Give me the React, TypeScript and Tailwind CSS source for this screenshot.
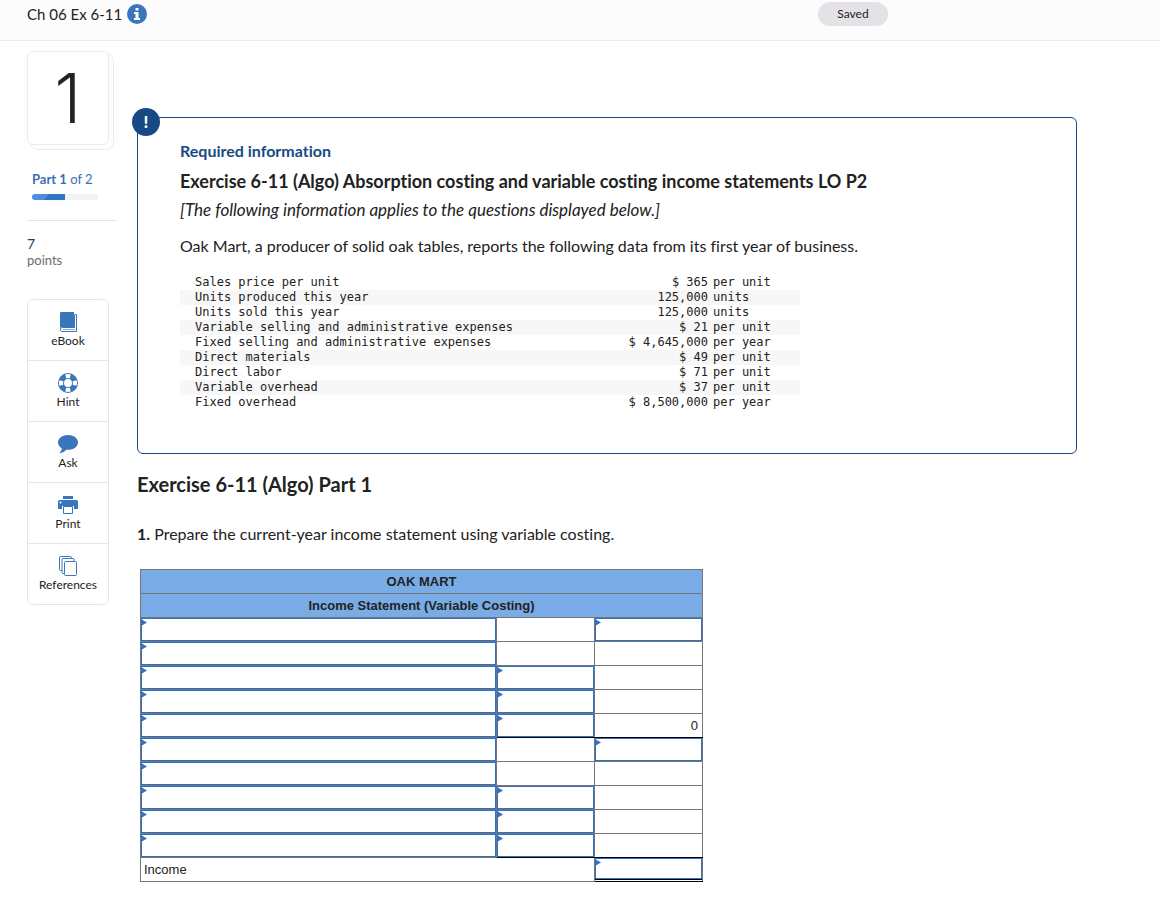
import type { ReactNode } from 'react';

const dataRows = [
  ['Sales price per unit', '$ 365', 'per unit'],
  ['Units produced this year', '125,000', 'units'],
  ['Units sold this year', '125,000', 'units'],
  ['Variable selling and administrative expenses', '$ 21', 'per unit'],
  ['Fixed selling and administrative expenses', '$ 4,645,000', 'per year'],
  ['Direct materials', '$ 49', 'per unit'],
  ['Direct labor', '$ 71', 'per unit'],
  ['Variable overhead', '$ 37', 'per unit'],
  ['Fixed overhead', '$ 8,500,000', 'per year'],
];

type Row = { mid?: boolean; end?: boolean; total?: boolean; value?: string };

const statementRows: Row[] = [
  { end: true },
  {},
  { mid: true },
  { mid: true },
  { mid: true, total: true, value: '0' },
  { end: true },
  {},
  { mid: true },
  { mid: true },
  { mid: true, total: true },
];

function BookIcon() {
  return (
    <svg width="20" height="20" viewBox="0 0 20 20" fill="none" stroke="#3a76bc" aria-hidden="true">
      <path d="M3 0h13v15H4.500c-1 0-1.700.4-2.500 1.200V1.500C2 .6 2.300 0 3 0z" fill="#3a76bc" stroke="none" />
      <path d="M17 2.500h1.500v17H4a2 2 0 0 1-1.500-2.500C2.800 16 3.500 15.500 4.500 15.500H16.500V2.500" />
      <path d="M5 17.500h12" strokeWidth=".6" />
    </svg>
  );
}

function HintIcon() {
  return (
    <svg width="20" height="20" viewBox="0 0 20 20" fill="none" aria-hidden="true">
      <circle cx="10" cy="10" r="7" stroke="#3a76bc" strokeWidth="6" />
      <g fill="#fff">
        <path d="M7.200 1.400a9 9 0 0 1 5.600 0l-1.100 4a5 5 0 0 0-3.400 0z" />
        <path d="M7.200 18.600a9 9 0 0 0 5.600 0l-1.100-4a5 5 0 0 1-3.400 0z" />
        <path d="M1.400 7.200a9 9 0 0 0 0 5.600l4-1.100a5 5 0 0 1 0-3.400z" />
        <path d="M18.600 7.200a9 9 0 0 1 0 5.600l-4-1.100a5 5 0 0 0 0-3.400z" />
      </g>
    </svg>
  );
}

function AskIcon() {
  return (
    <svg width="20" height="20" viewBox="0 0 20 20" fill="#3a76bc" aria-hidden="true">
      <path d="M10 1C4.500 1 0 4.200 0 8.400c0 2.500 1.500 4.500 3.900 5.900-.3 1.900-1.200 3.400-2.600 4.900 2.700-.3 5.100-1.400 6.900-3.500.6.100 1.200.1 1.800.1 5.500 0 10-3.200 10-7.400S15.500 1 10 1z" />
    </svg>
  );
}

function PrintIcon() {
  return (
    <svg width="20" height="20" viewBox="0 0 20 20" fill="#3a76bc" aria-hidden="true">
      <path d="M5 1h10v3H5z" />
      <path d="M1.500 5h17A1.500 1.500 0 0 1 20 6.500V14h-4v-3H4v3H0V6.500A1.500 1.500 0 0 1 1.500 5z" />
      <path d="M5.500 11.500h9v7h-9z" fill="#fff" stroke="#3a76bc" />
      <circle cx="2.500" cy="7.500" r="1" fill="#fff" />
    </svg>
  );
}

function ReferencesIcon() {
  return (
    <svg width="20" height="20" viewBox="0 0 20 20" fill="#fff" stroke="#3a76bc" aria-hidden="true">
      <rect x="1.500" y=".5" width="12" height="14" rx="1" />
      <rect x="4" y="2.500" width="12" height="15" rx="1" />
      <rect x="6.500" y="5.500" width="12" height="14" rx="1" />
    </svg>
  );
}

const tools: [string, ReactNode][] = [
  ['eBook', <BookIcon />],
  ['Hint', <HintIcon />],
  ['Ask', <AskIcon />],
  ['Print', <PrintIcon />],
  ['References', <ReferencesIcon />],
];

function Marker() {
  return (
    <svg className="absolute top-px left-0" width="6" height="7" viewBox="0 0 6 7" fill="#2f72c4" aria-hidden="true">
      <path d="M0 0l6 3.500L0 7z" />
    </svg>
  );
}

function Entry({ label }: { label: string }) {
  return (
    <div className="relative">
      <input
        type="text"
        aria-label={label}
        className="block h-[23px] w-full border-0 bg-white px-1 shadow-[inset_0_0_0_1px_#2f72c4] outline-none"
      />
      <Marker />
    </div>
  );
}

function Sidebar() {
  return (
    <aside className="w-[90px] shrink-0 pt-[10px]">
      <div className="relative h-[99px] w-[87px]">
        <div className="absolute right-0 bottom-0 h-[97px] w-[84px] rounded-lg border border-[#ececec] bg-white" />
        <div className="absolute top-0 left-0 flex h-[94px] w-[82px] items-center justify-center rounded-md border border-[#ececec] bg-white font-['Inter',sans-serif] text-[68px] font-[350] text-[#222]">
          1
        </div>
      </div>
      <div className="mt-[19px] px-[5px]">
        <p className="text-[13px] leading-5 text-[#3a6fb5]">
          <strong>Part 1</strong> of 2
        </p>
        <div className="mt-[5px] h-[6px] w-[66px] overflow-hidden rounded-full bg-[#f2f2f2]">
          <div className="h-full w-1/2 bg-linear-[135deg,#4a90d9_45%,#2b77c0_45%]" />
        </div>
      </div>
      <hr className="mt-5 border-[#e6e6e6]" />
      <p className="mt-[15px] text-[14px] leading-4 text-[#1a3f73]">7</p>
      <p className="text-[13px] leading-4 text-[#6d6d6d]">points</p>
      <nav className="mt-[31px] w-[82px] divide-y divide-[#e6e6e6] rounded-md border border-[#e6e6e6]">
        {tools.map(([label, icon]) => (
          <button
            key={label}
            type="button"
            className="flex h-[61px] w-full flex-col items-center pt-3 text-[12px] leading-[18px] last:h-[60px]"
          >
            {icon}
            {label}
          </button>
        ))}
      </nav>
    </aside>
  );
}

function RequiredInformation() {
  return (
    <section className="relative rounded-md border border-[#174a84] px-[42px] pt-[21px] pb-[43px]">
      <span className="absolute -top-[10px] -left-[6px] flex size-7 items-center justify-center rounded-full bg-[#174a84] text-[17px] font-black text-white">
        !
      </span>
      <h2 className="text-[16px] leading-6 font-bold text-[#174a84]">Required information</h2>
      <h3 className="mt-1 text-[18px] leading-7 font-bold">
        Exercise 6-11 (Algo) Absorption costing and variable costing income statements LO P2
      </h3>
      <p className="mt-[3px] text-[17px] leading-6 italic">
        [The following information applies to the questions displayed below.]
      </p>
      <p className="mt-3 text-[16px] leading-6">
        Oak Mart, a producer of solid oak tables, reports the following data from its first year of business.
      </p>
      <table className="mt-[17px] w-full max-w-[620px] table-fixed font-['DejaVu_Sans_Mono',monospace] text-[12px] leading-[15px]">
        <colgroup>
          <col />
          <col className="w-[100px]" />
          <col className="w-[92px]" />
        </colgroup>
        <tbody>
          {dataRows.map(([name, amount, unit]) => (
            <tr key={name} className="even:bg-[#f7f7f7]">
              <td className="p-0 pl-[15px]">{name}</td>
              <td className="p-0 text-right">{amount}</td>
              <td className="p-0 pl-[5px]">{unit}</td>
            </tr>
          ))}
        </tbody>
      </table>
    </section>
  );
}

function IncomeStatement() {
  return (
    <table className="mt-[23px] ml-[3px] w-full max-w-[563px] table-fixed border-collapse font-['Liberation_Sans',Arial,sans-serif] text-[13px] leading-[23px] [&_td]:h-6 [&_td]:border [&_td]:border-[#767676] [&_td]:p-0 [&_th]:h-6 [&_th]:border [&_th]:border-[#767676] [&_th]:bg-[#79ace6] [&_th]:p-0">
      <colgroup>
        <col />
        <col className="w-[98px]" />
        <col className="w-[108px]" />
      </colgroup>
      <thead>
        <tr>
          <th colSpan={3}>OAK MART</th>
        </tr>
        <tr>
          <th colSpan={3}>Income Statement (Variable Costing)</th>
        </tr>
      </thead>
      <tbody>
        {statementRows.map((row, i) => (
          <tr key={i} className={row.total ? '[&>td:not(:first-child)]:border-b-black' : ''}>
            <td>
              <Entry label={`Line ${i + 1} description`} />
            </td>
            <td>{row.mid && <Entry label={`Line ${i + 1} amount`} />}</td>
            <td className="text-right">
              {row.end && <Entry label={`Line ${i + 1} total`} />}
              {row.value && <span className="pr-1">{row.value}</span>}
            </td>
          </tr>
        ))}
        <tr className="[&>td:last-child]:border-b-black">
          <td colSpan={2}>
            <label htmlFor="income" className="pl-[3px]">
              Income
            </label>
          </td>
          <td>
            <div className="relative border-b border-black">
              <input
                id="income"
                type="text"
                className="block h-[21px] w-full border-0 bg-white px-1 shadow-[inset_0_0_0_1px_#2f72c4] outline-none"
              />
              <Marker />
            </div>
            <div className="h-px" />
          </td>
        </tr>
      </tbody>
    </table>
  );
}

export default function App() {
  return (
    <div className="bg-white font-['Lato','Open_Sans',sans-serif] text-[#222] [font-variant-ligatures:none]">
      <header className="flex h-[41px] items-start border-b border-[#ececec] bg-[#fcfcfc] pl-[27px]">
        <h1 className="pt-0.5 text-[15px] leading-6">Ch 06 Ex 6-11</h1>
        <button type="button" aria-label="Assignment details" className="mt-1 ml-[5px]">
          <svg width="20" height="20" viewBox="0 0 20 20" aria-hidden="true">
            <circle cx="10" cy="10" r="10" fill="#3a76bc" />
            <path d="M8.500 4h3v2.500h-3zM7 8h4.500v6H13v2H7v-2h1.500v-4H7z" fill="#fff" />
          </svg>
        </button>
        <span className="mt-0.5 mr-[273px] ml-auto w-[70px] rounded-full bg-[#e4e2e6] text-center text-[12px] leading-6">
          Saved
        </span>
      </header>
      <div className="flex gap-5 pr-[84px] pl-[27px]">
        <Sidebar />
        <main className="min-w-0 flex-1 pt-[76px] pb-4">
          <RequiredInformation />
          <h2 className="mt-4 text-[20px] leading-7 font-bold">Exercise 6-11 (Algo) Part 1</h2>
          <p className="mt-6 text-[16px] leading-6">
            <strong>1.</strong> Prepare the current-year income statement using variable costing.
          </p>
          <IncomeStatement />
        </main>
      </div>
    </div>
  );
}
